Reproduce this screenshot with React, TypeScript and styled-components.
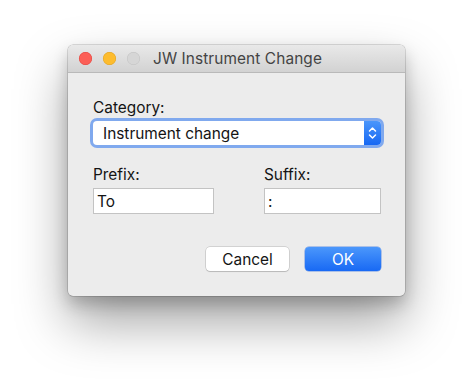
import { createGlobalStyle } from 'styled-components';
import styled from 'styled-components';

const GlobalStyle = createGlobalStyle`
  html, body {
    margin: 0;
    padding: 0;
    background: #ffffff;
  }
  body {
    font-family: Inter, "Noto Sans", "Liberation Sans", sans-serif;
    -webkit-font-smoothing: antialiased;
  }
`;

const Page = styled.div`
  width: 474px;
  height: 386px;
  padding: 45px 0 0 68px;
  box-sizing: border-box;
  background: #ffffff;
`;

const Window = styled.div`
  width: 337px;
  height: 251px;
  display: flex;
  flex-direction: column;
  background: #ececec;
  border-radius: 5px;
  overflow: hidden;
  box-shadow: 0 0 0 0.5px rgba(0, 0, 0, 0.25), 0 8px 16px rgba(0, 0, 0, 0.2),
    0 26px 52px rgba(0, 0, 0, 0.36);
`;

const TitleBar = styled.div`
  height: 28px;
  flex-shrink: 0;
  display: flex;
  align-items: center;
  padding-left: 11px;
  box-sizing: border-box;
  background: linear-gradient(#e9e9e9, #d2d2d2);
  border-bottom: 1px solid #b9b9b9;
`;

const Lights = styled.div`
  display: flex;
  gap: 11px;
  margin-right: 13px;
`;

const Light = styled.span<{ $color: string; $edge: string }>`
  width: 13px;
  height: 13px;
  border-radius: 50%;
  background: ${(p) => p.$color};
  box-shadow: inset 0 0 0 0.5px ${(p) => p.$edge};
`;

const Title = styled.div`
  font-size: 15.4px;
  color: #444444;
  letter-spacing: 0.1px;
`;

const Body = styled.div`
  flex: 1;
  display: flex;
  flex-direction: column;
  padding: 26px 24px 25px 25px;
`;

const Label = styled.div`
  font-size: 15.4px;
  line-height: 18px;
  color: #141414;
`;

const SelectRing = styled.div`
  margin-top: 1px;
  margin-left: -3px;
  width: 294px;
  padding: 3px;
  box-sizing: border-box;
  border-radius: 7px;
  background: #80a9ee;
`;

const SelectBox = styled.div`
  height: 24px;
  display: flex;
  background: #ffffff;
  border-radius: 4px;
  overflow: hidden;
`;

const SelectValue = styled.div`
  flex: 1;
  display: flex;
  align-items: center;
  padding-left: 10px;
  font-size: 15.4px;
  color: #141414;
`;

const Stepper = styled.div`
  width: 17px;
  display: flex;
  align-items: center;
  justify-content: center;
  background: linear-gradient(#4a96fb, #1768f3);
`;

const FieldRow = styled.div`
  margin-top: 18px;
  display: flex;
  justify-content: space-between;
  width: 288px;
`;

const Field = styled.div<{ $width: number }>`
  width: ${(p) => p.$width}px;
  display: flex;
  flex-direction: column;
  gap: 4px;
`;

const TextBox = styled.div`
  height: 26px;
  box-sizing: border-box;
  border: 1px solid #c3c3c3;
  background: #ffffff;
  display: flex;
  align-items: center;
  padding-left: 3px;
  font-size: 15.4px;
  color: #141414;
`;

const Buttons = styled.div`
  margin-top: auto;
  display: flex;
  justify-content: flex-end;
  gap: 16px;
`;

const Button = styled.div<{ $primary?: boolean; $width: number }>`
  width: ${(p) => p.$width}px;
  height: 24px;
  box-sizing: border-box;
  border-radius: 4px;
  display: flex;
  align-items: center;
  justify-content: center;
  font-size: 15.4px;
  color: ${(p) => (p.$primary ? '#ffffff' : '#141414')};
  background: ${(p) =>
    p.$primary ? 'linear-gradient(#4b97fb, #1869f4)' : '#ffffff'};
  box-shadow: ${(p) =>
    p.$primary
      ? '0 0 0 0.5px rgba(20, 90, 220, 0.6)'
      : '0 0 0 0.5px rgba(0, 0, 0, 0.22), 0 1px 1px rgba(0, 0, 0, 0.12)'};
`;

export default function App() {
  return (
    <>
      <GlobalStyle />
      <Page>
        <Window>
          <TitleBar>
            <Lights>
              <Light $color="#fc5f57" $edge="#e0443e" />
              <Light $color="#fdbc2e" $edge="#dea123" />
              <Light $color="#d6d6d6" $edge="#c2c2c2" />
            </Lights>
            <Title>JW Instrument Change</Title>
          </TitleBar>
          <Body>
            <Label>Category:</Label>
            <SelectRing>
              <SelectBox>
                <SelectValue>Instrument change</SelectValue>
                <Stepper>
                  <svg width="9" height="14" viewBox="0 0 9 14" fill="none">
                    <path
                      d="M1.5 5 L4.5 2 L7.5 5 M1.5 9 L4.5 12 L7.5 9"
                      stroke="#ffffff"
                      strokeWidth="1.5"
                      strokeLinecap="round"
                      strokeLinejoin="round"
                    />
                  </svg>
                </Stepper>
              </SelectBox>
            </SelectRing>
            <FieldRow>
              <Field $width={121}>
                <Label>Prefix:</Label>
                <TextBox>To</TextBox>
              </Field>
              <Field $width={117}>
                <Label>Suffix:</Label>
                <TextBox>:</TextBox>
              </Field>
            </FieldRow>
            <Buttons>
              <Button $width={83}>Cancel</Button>
              <Button $width={76} $primary>
                OK
              </Button>
            </Buttons>
          </Body>
        </Window>
      </Page>
    </>
  );
}
